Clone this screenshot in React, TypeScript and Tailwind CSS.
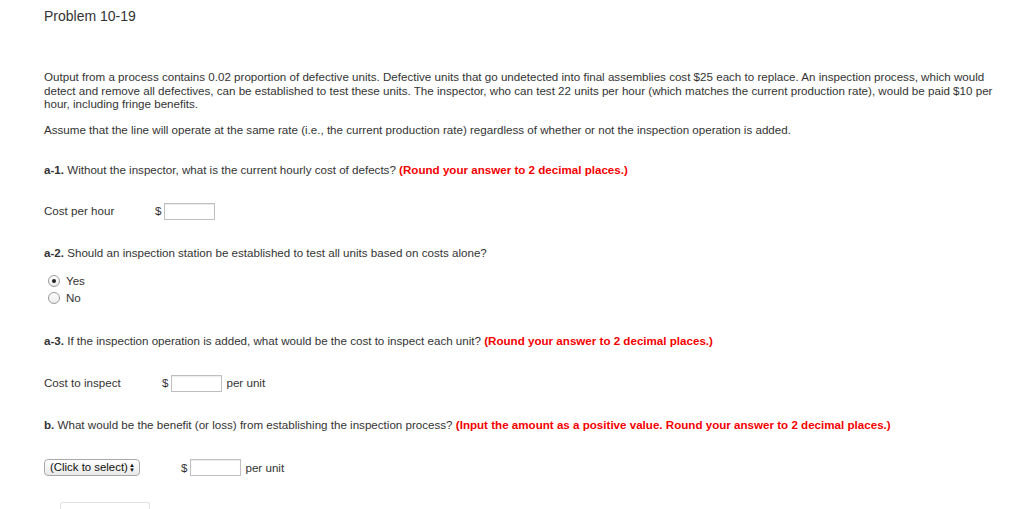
import React from "react"

const Money: React.FC<{ unit?: boolean }> = ({ unit }) => (
  <div className="flex items-center">
    <span className="mr-[3px]">$</span>
    <div className="h-[17px] w-[51px] border border-[#bfbfbf] bg-white shadow-[inset_0_1px_1px_rgba(0,0,0,0.08)]" />
    {unit && <span className="ml-[4px]">per unit</span>}
  </div>
)

const Radio: React.FC<{ checked?: boolean; label: string }> = ({ checked, label }) => (
  <div className="flex h-[17px] items-center gap-[6px]">
    <div className="flex h-[12px] w-[12px] items-center justify-center rounded-full border border-[#9a9a9a] bg-gradient-to-b from-white to-[#ececec]">
      {checked && <div className="h-[4px] w-[4px] rounded-full bg-[#222]" />}
    </div>
    <span>{label}</span>
  </div>
)

export default function App() {
  return (
    <div className="min-h-[509px] bg-white px-[44px] text-[11.6px] leading-[13.5px] text-[#333] font-['Liberation_Sans',Arial,sans-serif]">
      <h1 className="pt-[8px] text-[14px] leading-[17px] text-[#333]">Problem 10-19</h1>

      <p className="mt-[45px] w-[950px]">
        Output from a process contains 0.02 proportion of defective units. Defective units that go undetected into final assemblies cost $25 each to replace. An inspection process, which would detect and remove all defectives, can be established to test these units. The inspector, who can test 22 units per hour (which matches the current production rate), would be paid $10 per hour, including fringe benefits.
      </p>
      <p className="mt-[12px]">
        Assume that the line will operate at the same rate (i.e., the current production rate) regardless of whether or not the inspection operation is added.
      </p>

      <p className="mt-[27px]">
        <b>a-1.</b> Without the inspector, what is the current hourly cost of defects? <b className="text-[#f50000]">(Round your answer to 2 decimal places.)</b>
      </p>
      <div className="mt-[26px] flex items-center">
        <span className="w-[111px]">Cost per hour</span>
        <Money />
      </div>

      <p className="mt-[26px]">
        <b>a-2.</b> Should an inspection station be established to test all units based on costs alone?
      </p>
      <div className="mt-[13px] ml-[4px]">
        <Radio checked label="Yes" />
        <Radio label="No" />
      </div>

      <p className="mt-[28px]">
        <b>a-3.</b> If the inspection operation is added, what would be the cost to inspect each unit? <b className="text-[#f50000]">(Round your answer to 2 decimal places.)</b>
      </p>
      <div className="mt-[27px] flex items-center">
        <span className="w-[118px]">Cost to inspect</span>
        <Money unit />
      </div>

      <p className="mt-[26px]">
        <b>b.</b> What would be the benefit (or loss) from establishing the inspection process? <b className="text-[#f50000]">(Input the amount as a positive value. Round your answer to 2 decimal places.)</b>
      </p>
      <div className="mt-[28px] flex items-center">
        <div className="flex h-[17px] w-[96px] items-center justify-between rounded-[4px] border border-[#a8a8a8] bg-gradient-to-b from-white to-[#e9e9e9] pl-[5px] pr-[4px] text-[11.4px] text-[#111]">
          <span>(Click to select)</span>
          <span className="flex flex-col text-[6px] leading-[5px]">
            <span>▲</span>
            <span>▼</span>
          </span>
        </div>
        <div className="ml-[41px]">
          <Money unit />
        </div>
      </div>

      <div className="mt-[26px] ml-[16px] h-[8px] w-[90px] rounded-t-[3px] border border-b-0 border-[#e2e2e2]" />
    </div>
  )
}
